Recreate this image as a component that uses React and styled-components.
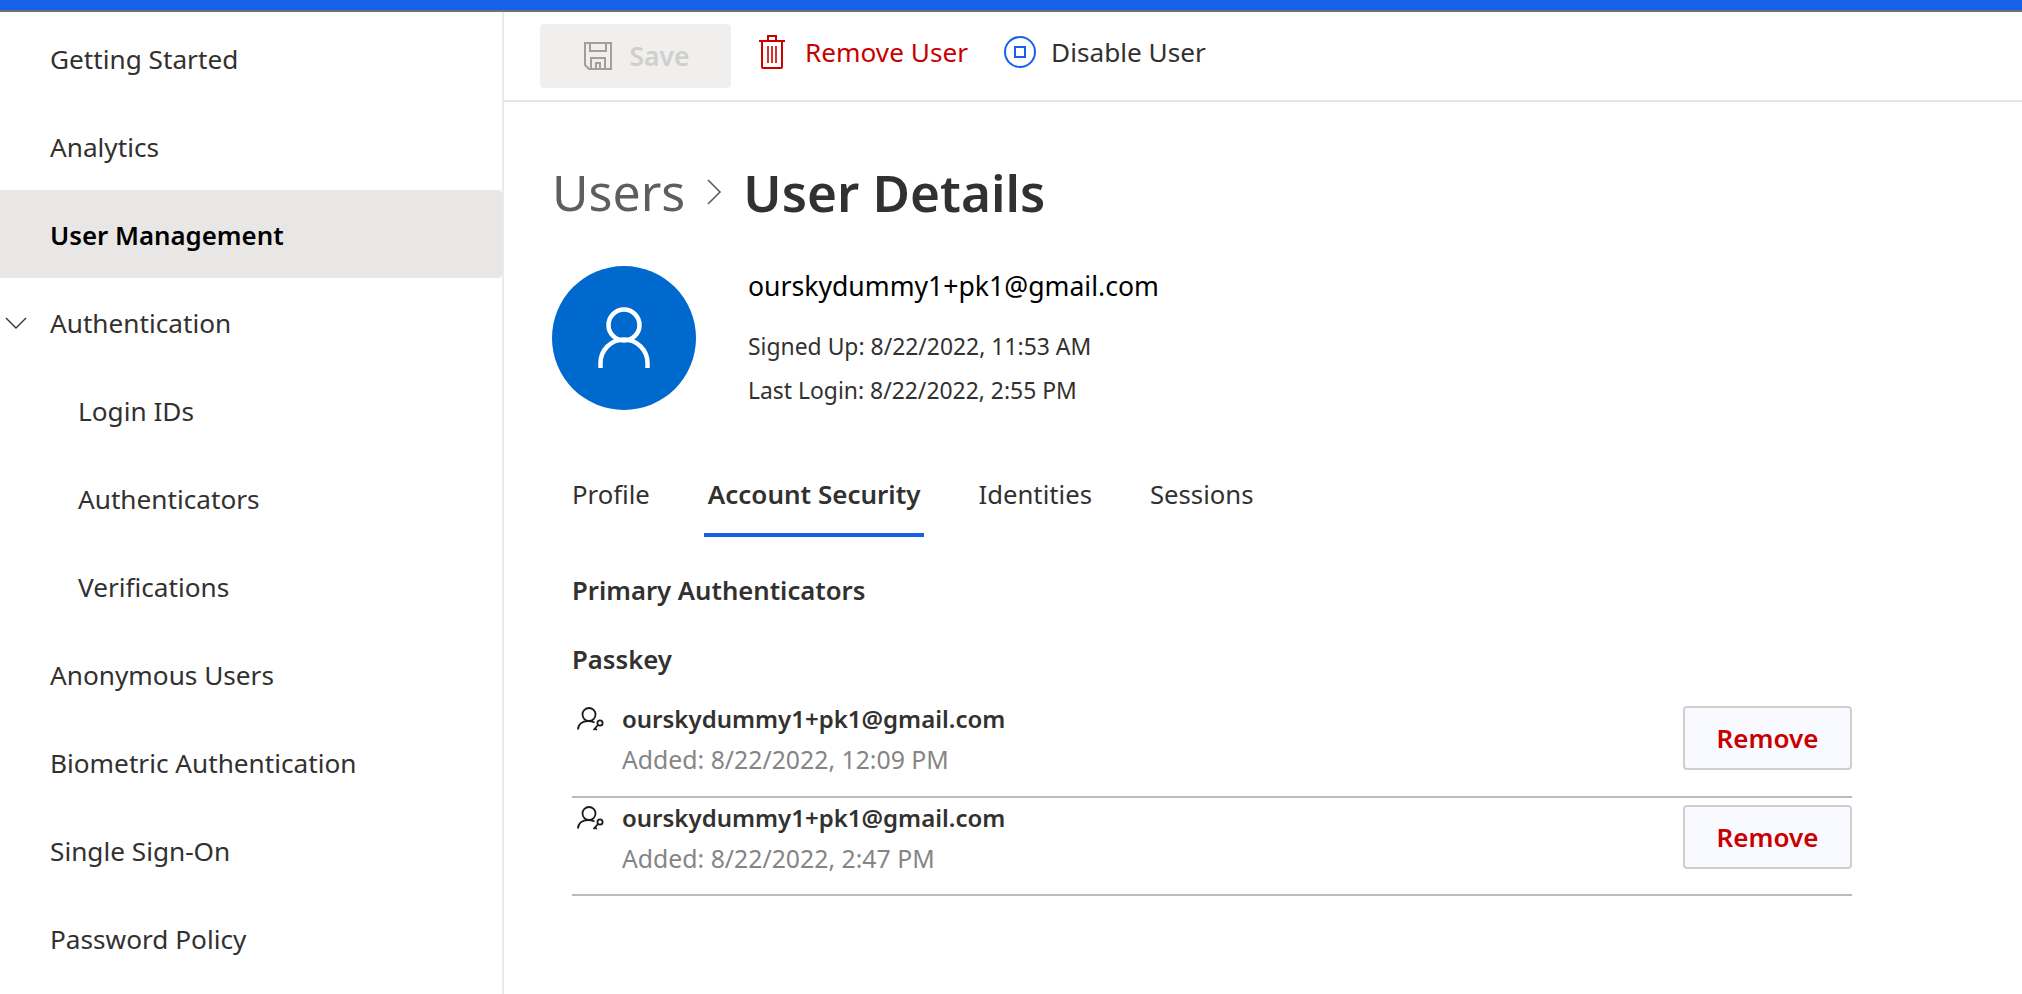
import React from "react";
import styled, { createGlobalStyle } from "styled-components";

const GlobalStyle = createGlobalStyle`
    html, body {
        margin: 0;
        padding: 0;
        height: 100%;
        overflow: hidden;
        background: #fff;
    }
    body {
        font-family: "Noto Sans", "Open Sans", sans-serif;
        color: #323130;
    }
    * { box-sizing: border-box; }
`;

const navItems = [
    { label: "Getting Started" },
    { label: "Analytics" },
    { label: "User Management", active: true },
    { label: "Authentication", expanded: true },
    { label: "Login IDs", sub: true },
    { label: "Authenticators", sub: true },
    { label: "Verifications", sub: true },
    { label: "Anonymous Users" },
    { label: "Biometric Authentication" },
    { label: "Single Sign-On" },
    { label: "Password Policy" },
];

const tabs = ["Profile", "Account Security", "Identities", "Sessions"];

const passkeys = [
    { email: "ourskydummy1+pk1@gmail.com", added: "Added: 8/22/2022, 12:09 PM" },
    { email: "ourskydummy1+pk1@gmail.com", added: "Added: 8/22/2022, 2:47 PM" },
];

const SaveIcon = () => (
    <svg width="28" height="28" viewBox="0 0 28 28" fill="none" stroke="#a19f9d" strokeWidth="2">
        <path d="M1 1h26v26H5l-4-4z" />
        <path d="M6 1v8h16V1" />
        <path d="M7 27V16h14v11" />
        <path d="M12 27v-6h4v6" />
    </svg>
);

const TrashIcon = () => (
    <svg width="26" height="34" viewBox="0 0 26 34" fill="none" stroke="#c80000" strokeWidth="2">
        <path d="M0 6h26" />
        <path d="M9 6V1h8v5" />
        <path d="M3 6v26a1 1 0 0 0 1 1h18a1 1 0 0 0 1-1V6" />
        <path d="M9 11v17M13 11v17M17 11v17" strokeWidth="1.6" />
    </svg>
);

const DisableIcon = () => (
    <svg width="32" height="32" viewBox="0 0 32 32" fill="none" stroke="#1661e8" strokeWidth="2">
        <circle cx="16" cy="16" r="15" />
        <rect x="11" y="11" width="10" height="10" />
    </svg>
);

const PersonIcon = () => (
    <svg width="52" height="62" viewBox="0 0 52 62" fill="none" stroke="#fff" strokeWidth="4.5">
        <circle cx="26" cy="18" r="15.5" />
        <path d="M2.500 61V56a23.500 23.500 0 0 1 47 0v5" />
    </svg>
);

const PasskeyIcon = () => (
    <svg width="28" height="24" viewBox="0 0 28 24" fill="none" stroke="#1b1a19" strokeWidth="1.8">
        <circle cx="12" cy="7.500" r="6.500" />
        <path d="M1 22.500c0-5 4-8.500 10-8.500 2.500 0 4.500.4 6.500 1.500" />
        <circle cx="23" cy="16" r="2.600" />
        <path d="M21 18l-4.500 5M18 21.500l1.800 1.500" />
    </svg>
);

const App = () => {
    return (
        <Page>
            <GlobalStyle />
            <TopBar />
            <Body>
                <Sidebar>
                    {navItems.map((item) => (
                        <NavItem key={item.label} $active={item.active} $sub={item.sub}>
                            {item.expanded && (
                                <Chevron width="22" height="12" viewBox="0 0 22 12">
                                    <path d="M1 1l10 10L21 1" fill="none" stroke="#323130" strokeWidth="1.4" />
                                </Chevron>
                            )}
                            {item.label}
                        </NavItem>
                    ))}
                </Sidebar>
                <Main>
                    <Toolbar>
                        <SaveButton><SaveIcon />Save</SaveButton>
                        <ToolButton $danger $gap={20}><TrashIcon />Remove User</ToolButton>
                        <ToolButton $gap={15}><DisableIcon />Disable User</ToolButton>
                    </Toolbar>
                    <Content>
                        <Breadcrumb>
                            <Crumb>Users</Crumb>
                            <svg width="16" height="28" viewBox="0 0 16 28">
                                <path d="M2 2l12 12L2 26" fill="none" stroke="#605e5c" strokeWidth="1.6" />
                            </svg>
                            <CrumbCurrent>User Details</CrumbCurrent>
                        </Breadcrumb>
                        <UserHeader>
                            <Avatar><PersonIcon /></Avatar>
                            <UserInfo>
                                <UserEmail>ourskydummy1+pk1@gmail.com</UserEmail>
                                <UserMeta>Signed Up: 8/22/2022, 11:53 AM</UserMeta>
                                <UserMeta>Last Login: 8/22/2022, 2:55 PM</UserMeta>
                            </UserInfo>
                        </UserHeader>
                        <TabBar>
                            {tabs.map((tab) => (
                                <Tab key={tab} $active={tab === "Account Security"}>{tab}</Tab>
                            ))}
                        </TabBar>
                        <Section>
                            <SectionTitle>Primary Authenticators</SectionTitle>
                            <SubTitle>Passkey</SubTitle>
                            <KeyList>
                                {passkeys.map((key) => (
                                    <KeyRow key={key.added}>
                                        <KeyIcon><PasskeyIcon /></KeyIcon>
                                        <KeyText>
                                            <KeyEmail>{key.email}</KeyEmail>
                                            <KeyAdded>{key.added}</KeyAdded>
                                        </KeyText>
                                        <RemoveButton>Remove</RemoveButton>
                                    </KeyRow>
                                ))}
                            </KeyList>
                        </Section>
                    </Content>
                </Main>
            </Body>
        </Page>
    );
};

export default App;

const Page = styled.div`
    height: 994px;
    display: flex;
    flex-direction: column;
    overflow: hidden;
`;

const TopBar = styled.div`
    height: 12px;
    flex: none;
    background: #1661e8;
    border-bottom: 2px solid #6f7173;
`;

const Body = styled.div`
    flex: 1;
    display: flex;
    min-height: 0;
`;

/* 왼쪽 메뉴 */
const Sidebar = styled.nav`
    width: 504px;
    flex: none;
    padding-top: 2px;
    border-right: 2px solid #edebe9;
`;

const NavItem = styled.div`
    position: relative;
    height: 88px;
    display: flex;
    align-items: center;
    padding: 2px 0 0 ${(p) => (p.$sub ? "78px" : "50px")};
    font-size: ${(p) => (p.$active ? "25.8px" : "26.2px")};
    font-weight: ${(p) => (p.$active ? 600 : 400)};
    color: ${(p) => (p.$active ? "#000" : "#323130")};
    background: ${(p) => (p.$active ? "#e8e7e5" : "transparent")};
    border-radius: ${(p) => (p.$active ? "0 4px 4px 0" : "0")};
`;

const Chevron = styled.svg`
    position: absolute;
    left: 5px;
    top: 39px;
`;

const Main = styled.main`
    flex: 1;
    min-width: 0;
`;

/* 상단 툴바 */
const Toolbar = styled.div`
    height: 90px;
    display: flex;
    align-items: flex-start;
    padding: 12px 0 0 36px;
    border-bottom: 2px solid #e6e6e6;
`;

const SaveButton = styled.button`
    width: 191px;
    height: 64px;
    display: flex;
    align-items: center;
    justify-content: center;
    gap: 17.5px;
    padding: 0 0 0 2.5px;
    border: none;
    border-radius: 4px;
    background: #f0efee;
    color: #cfcfcd;
    font: 600 26.5px "Noto Sans", sans-serif;
`;

const ToolButton = styled.button`
    height: 55px;
    display: flex;
    align-items: center;
    gap: ${(p) => p.$gap}px;
    margin-left: 28px;
    border: none;
    padding: 0;
    background: none;
    color: ${(p) => (p.$danger ? "#c80000" : "#323130")};
    font: 400 26.2px "Noto Sans", sans-serif;

    & + & {
        margin-left: 36px;
    }
`;

const Content = styled.div`
    padding: 0 0 0 48px;
`;

/* 페이지 제목 */
const Breadcrumb = styled.div`
    height: 80px;
    margin-top: 50px;
    margin-bottom: 3px;
    display: flex;
    align-items: center;
    gap: 21px;
`;

const Crumb = styled.span`
    font-size: 50px;
    color: #605e5c;
`;

const CrumbCurrent = styled.span`
    font-size: 51.3px;
    font-weight: 600;
    color: #323130;
`;

const UserHeader = styled.div`
    margin-top: 34px;
    display: flex;
    gap: 52px;
`;

const Avatar = styled.div`
    width: 144px;
    height: 144px;
    border-radius: 50%;
    background: #0069ce;
    display: flex;
    align-items: center;
    justify-content: center;
`;

const UserInfo = styled.div`
    display: flex;
    flex-direction: column;
`;

const UserEmail = styled.div`
    height: 40px;
    line-height: 40px;
    font-size: 26.6px;
    color: #000;
    margin-bottom: 19px;
`;

const UserMeta = styled.div`
    height: 44px;
    line-height: 44px;
    font-size: 22.9px;
    color: #323130;
`;

/* 탭 */
const TabBar = styled.div`
    margin-top: 48px;
    padding-left: 20px;
    display: flex;
    gap: 58px;
`;

const Tab = styled.div`
    position: relative;
    height: 76px;
    padding-bottom: 10px;
    display: flex;
    align-items: center;
    font-size: ${(p) => (p.$active ? "26px" : "25.7px")};
    font-weight: ${(p) => (p.$active ? 600 : 400)};
    color: #323130;

    ${(p) => p.$active && `
        &::after {
            content: "";
            position: absolute;
            left: -4px;
            right: -4px;
            bottom: 0;
            height: 4px;
            background: #1661e8;
        }
    `}
`;

const Section = styled.section`
    width: 1280px;
    margin-left: 20px;
`;

const SectionTitle = styled.h3`
    margin: 34px 0 0;
    height: 40px;
    line-height: 40px;
    font-size: 25.7px;
    font-weight: 600;
    color: #323130;
`;

const SubTitle = styled.h4`
    margin: 29px 0 0;
    height: 40px;
    line-height: 40px;
    font-size: 25.7px;
    font-weight: 600;
    color: #323130;
`;

/* 패스키 목록 */
const KeyList = styled.div`
    margin-top: 19px;
`;

const KeyRow = styled.div`
    height: 98.5px;
    display: flex;
    align-items: flex-start;
    border-bottom: 2px solid #bcbcbc;
`;

const KeyIcon = styled.div`
    width: 50px;
    padding: 8px 0 0 5px;
    flex: none;
`;

const KeyText = styled.div`
    flex: 1;
`;

const KeyEmail = styled.div`
    height: 40px;
    line-height: 40px;
    font-size: 24px;
    font-weight: 600;
    color: #323130;
`;

const KeyAdded = styled.div`
    height: 40px;
    line-height: 40px;
    font-size: 24.8px;
    color: #858585;
`;

const RemoveButton = styled.button`
    width: 169px;
    height: 64px;
    margin-top: 7px;
    border: 2px solid #cfcfcf;
    border-radius: 4px;
    background: #f9faff;
    color: #c80000;
    font: 600 26px "Noto Sans", sans-serif;
`;
